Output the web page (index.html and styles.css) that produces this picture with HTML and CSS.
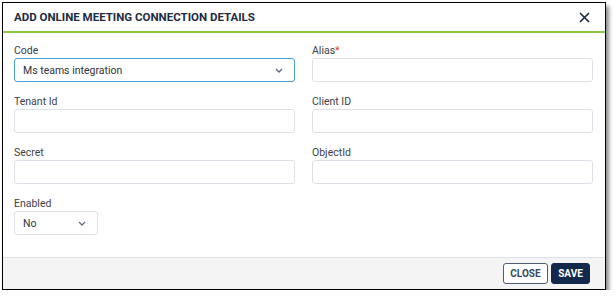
FILE: index.html
```html
<!DOCTYPE html>
<html>
<head>
<meta charset="utf-8">
<link rel="stylesheet" href="styles.css">
</head>
<body>
<div class="dialog">
  <div class="dialog-header">
    <h1 class="dialog-title">ADD ONLINE MEETING CONNECTION DETAILS</h1>
    <button class="close-x" aria-label="Close">
      <svg width="11" height="11" viewBox="0 0 11 11"><path d="M1 1 L10 10 M10 1 L1 10" stroke="#1c2b3f" stroke-width="1.7" fill="none"/></svg>
    </button>
  </div>
  <div class="dialog-body">
    <div class="grid">
      <div class="field">
        <label class="label">Code</label>
        <div class="select focused"><span>Ms teams integration</span>
          <svg class="chev" width="8" height="5" viewBox="0 0 8 5"><path d="M1 1 L4 4 L7 1" stroke="#5b6b7d" stroke-width="1.3" fill="none"/></svg>
        </div>
      </div>
      <div class="field">
        <label class="label">Alias<span class="req">*</span></label>
        <div class="input"></div>
      </div>
      <div class="field">
        <label class="label">Tenant Id</label>
        <div class="input"></div>
      </div>
      <div class="field">
        <label class="label">Client ID</label>
        <div class="input"></div>
      </div>
      <div class="field">
        <label class="label">Secret</label>
        <div class="input"></div>
      </div>
      <div class="field">
        <label class="label">ObjectId</label>
        <div class="input"></div>
      </div>
      <div class="field">
        <label class="label">Enabled</label>
        <div class="select small"><span>No</span>
          <svg class="chev" width="8" height="5" viewBox="0 0 8 5"><path d="M1 1 L4 4 L7 1" stroke="#5b6b7d" stroke-width="1.3" fill="none"/></svg>
        </div>
      </div>
    </div>
  </div>
  <div class="dialog-footer">
    <button class="btn btn-outline">CLOSE</button>
    <button class="btn btn-primary">SAVE</button>
  </div>
</div>
</body>
</html>
```
FILE: styles.css
```css
html, body {
  margin: 0;
  padding: 0;
  background: #ffffff;
}
body {
  font-family: Roboto, "Liberation Sans", Arial, sans-serif;
  padding: 2px 0 0 2px;
}
.dialog {
  width: 602px;
  height: 286px;
  border: 1px solid #000;
  background: #fff;
  box-shadow: 3px 4px 4px rgba(0,0,0,0.45);
  display: flex;
  flex-direction: column;
}
.dialog-header {
  height: 28px;
  flex: none;
  border-bottom: 2px solid #8cc63f;
  display: flex;
  align-items: center;
  justify-content: space-between;
  padding: 0 15px 0 11px;
}
.dialog-title {
  margin: 0;
  font-size: 11.5px;
  font-weight: 700;
  color: #1c2b3f;
}
.close-x {
  border: 0;
  background: transparent;
  padding: 0;
  width: 11px;
  height: 11px;
  display: flex;
}
.dialog-body {
  flex: 1;
  padding: 11px 11px 0 11px;
}
.grid {
  display: grid;
  grid-template-columns: 281px 281px;
  column-gap: 17px;
  row-gap: 13px;
}
.field {
  display: flex;
  flex-direction: column;
}
.label {
  font-size: 10.5px;
  line-height: 13px;
  color: #3c4148;
  margin-bottom: 1px;
}
.req {
  color: #e53935;
}
.input, .select {
  height: 22px;
  border: 1px solid #dde1e7;
  border-radius: 3px;
  box-sizing: content-box;
}
.select {
  display: flex;
  align-items: center;
  justify-content: space-between;
  padding: 0 11px 0 8px;
  font-size: 10.5px;
  color: #2f3338;
}
.select.focused {
  border-color: #4a9ed8;
}
.select.small {
  width: 63px;
}
.chev {
  display: block;
}
.dialog-footer {
  height: 32px;
  flex: none;
  border-top: 1px solid #dde1e7;
  background: #f4f4f5;
  display: flex;
  justify-content: flex-end;
  align-items: flex-start;
  gap: 3px;
  padding: 5px 15px 0 0;
  box-sizing: border-box;
}
.btn {
  height: 21px;
  border-radius: 3px;
  font-family: Roboto, "Liberation Sans", Arial, sans-serif;
  font-size: 10px;
  font-weight: 700;
  padding: 0;
}
.btn-outline {
  width: 45px;
  background: #fff;
  border: 1px solid #4d5c6e;
  color: #3a4a5c;
}
.btn-primary {
  width: 39px;
  background: #13294b;
  border: 1px solid #13294b;
  color: #fff;
}
```
